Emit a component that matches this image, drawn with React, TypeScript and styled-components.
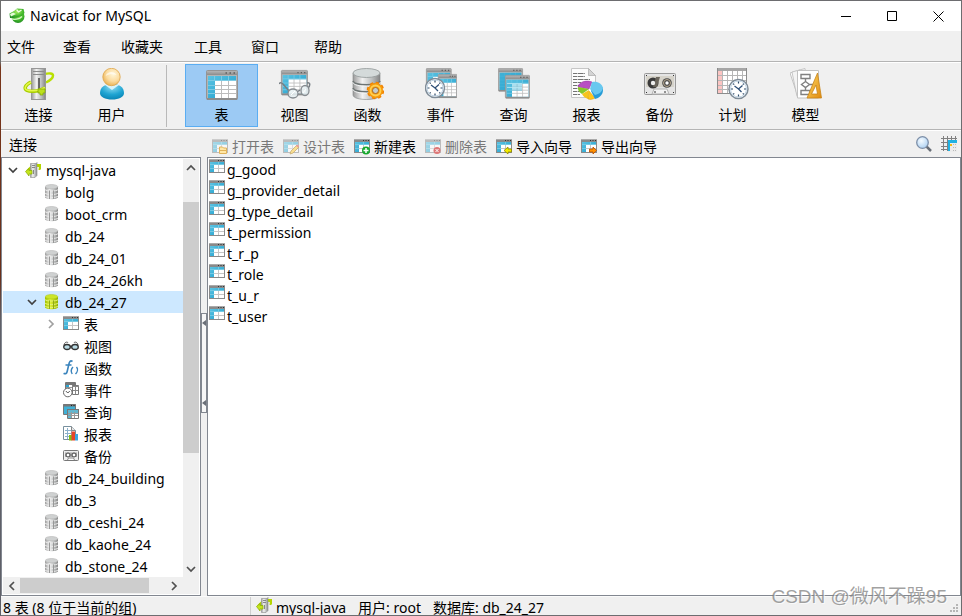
import React from "react";
import styled, { createGlobalStyle } from "styled-components";

const FONT = '"Noto Sans", "Noto Sans CJK SC", sans-serif';
const FACE = "#f0f0f0";
const EDGE = "#828790";

const GlobalStyle = createGlobalStyle`
  * { box-sizing: border-box; }
  body { margin: 0; font: 14px/20px ${FONT}; color: #000; background: ${FACE}; }
  button { font: inherit; color: inherit; border: 0; padding: 0; background: none; }
  ul { list-style: none; margin: 0; padding: 0; }
  svg { display: block; flex: none; }
`;

/* ---------- icons ---------- */

const Defs = () => (
  <svg width="0" height="0" aria-hidden="true">
    <defs>
      <linearGradient id="metal" x1="0" x2="1">
        <stop offset="0" stopColor="#9a9a9a" />
        <stop offset=".35" stopColor="#f2f2f2" />
        <stop offset=".7" stopColor="#bcbfbf" />
        <stop offset="1" stopColor="#858585" />
      </linearGradient>
      <linearGradient id="lime" x1="0" x2="1">
        <stop offset="0" stopColor="#9bbd00" />
        <stop offset=".4" stopColor="#e2f23a" />
        <stop offset="1" stopColor="#8fae00" />
      </linearGradient>
      <linearGradient id="sky" x1="0" y1="0" x2="1" y2="1">
        <stop offset="0" stopColor="#5cc3e2" />
        <stop offset="1" stopColor="#1d9dcb" />
      </linearGradient>
      <linearGradient id="bar" x1="0" y1="0" x2="0" y2="1">
        <stop offset="0" stopColor="#b4b4b4" />
        <stop offset="1" stopColor="#8c8c8c" />
      </linearGradient>
      <radialGradient id="head" cx=".6" cy=".35" r=".65">
        <stop offset="0" stopColor="#fff6d8" />
        <stop offset=".6" stopColor="#fbdca0" />
        <stop offset="1" stopColor="#ecb65c" />
      </radialGradient>
      <radialGradient id="torso" cx=".5" cy=".2" r=".8">
        <stop offset="0" stopColor="#8edcf2" />
        <stop offset=".6" stopColor="#1fa4d2" />
        <stop offset="1" stopColor="#0b86b6" />
      </radialGradient>
      <radialGradient id="globe" cx=".5" cy=".35" r=".7">
        <stop offset="0" stopColor="#a9ee62" />
        <stop offset=".6" stopColor="#43b82c" />
        <stop offset="1" stopColor="#1b8420" />
      </radialGradient>
      <linearGradient id="gold" x1="0" y1="0" x2="1" y2="1">
        <stop offset="0" stopColor="#ffdb66" />
        <stop offset="1" stopColor="#e08a10" />
      </linearGradient>
      <radialGradient id="lens" cx=".4" cy=".35" r=".7">
        <stop offset="0" stopColor="#f5fbff" />
        <stop offset="1" stopColor="#acd0f2" />
      </radialGradient>
    </defs>
  </svg>
);

const Icon = ({ size = 32, children }: { size?: number; children: React.ReactNode }) => (
  <svg width={size} height={size} viewBox={`0 0 ${size} ${size}`} aria-hidden="true">
    {children}
  </svg>
);

const Grid = () => (
  <>
    <rect x=".5" y=".5" width="31" height="29" rx="1" fill="#b4b4b4" stroke="#949494" />
    <rect x="1" y="1" width="30" height="4" fill="url(#bar)" />
    <path d="M19.500 3h1.500M23.500 3h1.500M27.500 3h1.500" stroke="#5e5e5e" strokeWidth="1.500" />
    <rect x="2" y="6" width="28" height="22" fill="url(#sky)" />
    <path d="M9 11h21v17H9z" fill="#fff" />
    <path d="M9 15.500h21M9 19.500h21M9 23.500h21M15.500 11v17M22.500 11v17" stroke="#bcbcbc" />
    <path d="M2 10.500h28M2 15.500h7M2 19.500h7M2 23.500h7M8.500 6v5M15.500 6v5M22.500 6v5" stroke="#7ccbe4" />
    <path d="M1 29h30" stroke="#8d8d8d" strokeWidth="2" />
  </>
);

const SmallGrid = ({ faded }: { faded?: boolean }) => (
  <g opacity={faded ? 0.5 : 1}>
    <rect x="0" y="0" width="16" height="14" fill="#8a8a8a" />
    <path d="M0 .5h16" stroke="#aaa" />
    <path d="M9 1.500h1M11.500 1.500h1M14 1.500h1" stroke="#333" />
    <rect x="1" y="3" width="14" height="10" fill="url(#sky)" />
    <path d="M5 6h10v7H5z" fill="#fff" />
    <path d="M5 9.500h10M9.500 6v7" stroke="#c6c6c6" />
    <path d="M1 9.500h4M9.500 3v3M1 5.500h14" stroke="#75c9e3" />
  </g>
);

const Clock = () => (
  <>
    <circle cx="0" cy="0" r="9.500" fill="#fff" stroke="#7f8c98" strokeWidth="1.500" />
    <circle cx="0" cy="0" r="8" fill="none" stroke="#bfd4e6" />
    <path d="M0-7.500v2M0 7.500v-2M-7.500 0h2M7.500 0h-2M-5.300-5.300l1 1M5.300-5.300l-1 1M-5.300 5.300l1-1M5.300 5.300l-1-1" stroke="#2f4a66" strokeWidth="1.200" />
    <path d="M-4-3L0 0l4-3.500M0 0l3 3" fill="none" stroke="#2d4f77" strokeWidth="1.300" />
  </>
);

const ConnectIcon = () => (
  <Icon>
    <path d="M21 6c5-1 9-1 9 1.500 0 3-3 5-7 7" fill="none" stroke="#b9e000" strokeWidth="2.500" />
    <rect x="8.500" y=".5" width="14" height="31" fill="url(#metal)" stroke="#979797" />
    <path d="M10 3.500h11M10 6.500h11" stroke="#8b8b8b" />
    <path d="M16 10v11" stroke="#444" strokeWidth="1.500" />
    <path d="M8 14C2 17 .5 21 4 22.500c5 2 14 0 18-2.500" fill="none" stroke="#a9cf00" strokeWidth="3.500" />
    <path d="M8 14C2 17 .5 21 4 22c5 2 14 0 18-2.500" fill="none" stroke="#e6f84b" strokeWidth="1.500" />
    <path d="M15 21h7v4h-2v2h-3v-2h-2z" fill="#bce01b" stroke="#7fa307" strokeWidth=".7" />
  </Icon>
);

const UserIcon = () => (
  <Icon>
    <path d="M4 25c0-6 5-9 12-9s12 3 12 9c0 4-5 6.500-12 6.500S4 29 4 25z" fill="url(#torso)" />
    <path d="M9 17l7 5 7-5z" fill="#d8f4fb" />
    <circle cx="15.500" cy="9" r="8.700" fill="url(#head)" stroke="#dda54a" strokeWidth=".8" />
    <path d="M9.500 8c2-5 9-5 11-1-4-1-7-1-11 1z" fill="#fff" opacity=".6" />
  </Icon>
);

const TableIcon = () => (
  <Icon><g transform="translate(0 2)"><Grid /></g></Icon>
);

const ViewIcon = () => (
  <Icon>
    <g transform="translate(2 2) scale(.84)"><Grid /></g>
    <path d="M0 16c1-2 3-1 4 0l6 7M18 24l3-2M29 20c2-2 3-6-1-5" fill="none" stroke="#777f85" strokeWidth="1.500" />
    <ellipse cx="14" cy="25.500" rx="5" ry="4.500" fill="#e6f0f2" fillOpacity=".85" stroke="#858b90" strokeWidth="1.300" />
    <ellipse cx="26" cy="22.500" rx="4" ry="5" fill="#e6f0f2" fillOpacity=".85" stroke="#858b90" strokeWidth="1.300" />
    <path d="M12 27l4-4M24 25l3-4" stroke="#fff" />
  </Icon>
);

const FunctionIcon = () => (
  <Icon>
    <path d="M1 5v22c0 6 27 6 27 0V5z" fill="url(#metal)" stroke="#7f8584" strokeWidth=".6" />
    <path d="M1 13c1 5 26 5 27 0M1 20c1 5 26 5 27 0" fill="none" stroke="#6d7473" strokeWidth="1.500" />
    <path d="M1 14.500c1 5 26 5 27 0M1 21.500c1 5 26 5 27 0" fill="none" stroke="#f3f5f5" />
    <ellipse cx="14.500" cy="5" rx="13.500" ry="4.500" fill="#d4dada" stroke="#929898" strokeWidth=".8" />
    <circle cx="23.500" cy="22.500" r="7.500" fill="none" stroke="#f08000" strokeWidth="2.500" strokeDasharray="3.300 2.590" />
    <circle cx="23.500" cy="22.500" r="5.300" fill="none" stroke="#f79a0c" strokeWidth="4.500" />
    <circle cx="23.500" cy="22.500" r="5" fill="none" stroke="#ffd052" strokeWidth="1.800" />
    <circle cx="23.500" cy="22.500" r="3" fill="#c2cccf" stroke="#a85b00" strokeWidth=".8" />
  </Icon>
);

const EventIcon = () => (
  <Icon>
    <g transform="translate(1) scale(.8)"><Grid /></g>
    <g transform="translate(13 6) scale(.6 .8)"><Grid /></g>
    <g transform="translate(10 20)"><Clock /></g>
  </Icon>
);

const QueryIcon = () => (
  <Icon>
    <g transform="scale(.78)"><Grid /></g>
    <path d="M2 5h21v17H2z" fill="#36abd3" opacity=".75" />
    <g transform="translate(7 7) scale(.78)"><Grid /></g>
    <path d="M8 12h16v11H8z" fill="#58bfdf" opacity=".5" />
    <path d="M9 15.500h15M9 19.500h15" stroke="#c1edf8" opacity=".7" />
  </Icon>
);

const ReportIcon = () => (
  <Icon>
    <path d="M.5.500h17l7 7v22H.5z" fill="#fcfcfc" stroke="#c6c6c6" />
    <path d="M17.500.5l7 7h-7z" fill="#d4d4d4" stroke="#aaa" strokeWidth=".7" />
    <path d="M2 5.500h12M2 8.500h12M2 11.500h17M2 14.500h8M2 17.500h6M2 20.500h6M2 23.500h7M2 26.500h7" stroke="#747474" strokeDasharray="4 .6 6 .6" />
    <path d="M18 21L7 19c1-6 10-7 14-5z" fill="#b84fc2" stroke="#98369f" strokeWidth=".5" />
    <path d="M18 21L7 19c-.5 3 1 5 4 7z" fill="#86c728" />
    <path d="M18 22l-7 4c1 2 3 4 6 5z" fill="#f6c41c" />
    <path d="M18 23l-1 8c3 1 5 0 7-1z" fill="#ffc619" stroke="#d89a00" strokeWidth=".5" />
    <path d="M20 23l1-8c6-1 11 3 11 7 0 5-4 8-8 9z" fill="#279cd6" />
    <path d="M19 21l2-7c6-1 10 2 11 6-1 4-4 6-8 7z" fill="#69c8ef" />
  </Icon>
);

const BackupIcon = () => (
  <Icon>
    <rect x=".5" y="5.500" width="31" height="21" rx="1" fill="#e4e4e4" stroke="#9a9a9a" />
    <rect x="2" y="8" width="28" height="11" fill="#d6d3ca" />
    <circle cx="9" cy="15" r="5.500" fill="#3a3a3a" />
    <path d="M12 9h4l-3 10H9z" fill="#6a655c" />
    <circle cx="9" cy="15" r="2.200" fill="#eee" />
    <circle cx="23" cy="15" r="4.800" fill="#4a4a4a" />
    <circle cx="23" cy="15" r="3.500" fill="none" stroke="#b9aa91" />
    <circle cx="23" cy="15" r="1.700" fill="#fff" />
    <path d="M8 26l2-5h13l2 5z" fill="#f3f3f3" stroke="#b3b3b3" />
    <path d="M10 24h2M20 24h2M2 7.500h1M29 7.500h1M2 24.500h1M29 24.500h1" stroke="#333" />
  </Icon>
);

const ScheduleIcon = () => (
  <Icon>
    <rect x=".5" y=".5" width="29" height="25" fill="#fff" stroke="#8c8c8c" />
    <path d="M1 1.500h28" stroke="#a6a6a6" strokeWidth="3" />
    <path d="M1 3h4v22H1z" fill="#fbc4c2" />
    <path d="M5.500 3v22M10.500 3v22M15.500 3v22M20.500 3v22M25.500 3v22M1 7.500h28M1 12.500h28M1 17.500h28M1 21.500h28" stroke="#b6b6b6" />
    <g transform="translate(21.500 21)"><Clock /></g>
  </Icon>
);

const ModelIcon = () => (
  <Icon>
    <path d="M0 5l10-3 8 24-10 3z" fill="#fbfbfb" stroke="#b8b8b8" strokeWidth=".8" />
    <path d="M2 4L15 .5l4 25-12 3z" fill="#f4f4f4" stroke="#bbb" strokeWidth=".8" />
    <path d="M7.500 2.500h21V30h-21z" fill="#fff" stroke="#c2c2c2" />
    <path d="M11 6.500h9v4h-9zM15.500 10.500v3M15.500 13.500l4 3-4 3-4-3zM15.500 19.500v3M11 22.500h9v4h-9zM19.500 16.500h5" fill="none" stroke="#808080" strokeWidth="1.400" />
    <path d="M27.500 5L31.500 30 17 30z" fill="url(#gold)" stroke="#c88418" strokeWidth=".8" />
    <path d="M26 17l1.500 9h-6z" fill="#fff" stroke="#c88418" strokeWidth=".8" />
  </Icon>
);

const AppIcon = () => (
  <Icon size={18}>
    <circle cx="10" cy="9.500" r="6.500" fill="url(#globe)" />
    <path d="M1.500 6.500L6 4l3-2.500 6.500.5 1 4-3 3-5 1.500L2 11z" fill="url(#globe)" />
    <path d="M3 11.500c3 1.500 8 1 11-2" fill="none" stroke="#d7fac4" strokeWidth="1.300" />
    <path d="M2 7l3-1.500 3 1.500-5 2.500z" fill="#e6fbd6" />
    <path d="M8.500 2.500l2 2.500 3-2" fill="none" stroke="#f3ffe9" strokeWidth="1.300" />
  </Icon>
);

const ServerIcon = () => (
  <Icon size={16}>
    <path d="M10 4h5l-.5 4M2 9l3-3v2.500" fill="none" stroke="#b4d500" strokeWidth="2" />
    <path d="M5.500 1.500h5.500l1-1v13l-2 2H5.500z" fill="url(#metal)" stroke="#999" strokeWidth=".7" />
    <path d="M7 3.500h3M7 5.500h3M8.500 8v4" stroke="#888" />
    <path d="M.5 9.500L4 6.500v2h3v3.500H4v2z" fill="#c4e51d" stroke="#87a800" strokeWidth=".7" />
    <path d="M12 3h3.500v4" fill="none" stroke="#b4d500" strokeWidth="1.800" />
  </Icon>
);

const DbIcon = ({ open }: { open?: boolean }) => (
  <Icon size={16}>
    <path d="M0 3v10c0 3 13 3 13 0V3z" fill={open ? "url(#lime)" : "url(#metal)"} />
    <path d="M0 5.500c1 2 12 2 13 0M0 9c1 2 12 2 13 0M0 12c1 2 12 2 13 0" fill="none" stroke={open ? "#e6f57a" : "#ececec"} />
    <path d="M4.500 6.500v8.500M8.500 6.500v8.500" stroke={open ? "#8fa91a" : "#989898"} />
    <ellipse cx="6.500" cy="2.700" rx="6.300" ry="2.200" fill={open ? "#cce52a" : "#cfd1d1"} stroke={open ? "#a9c511" : "#aaa"} strokeWidth=".5" />
  </Icon>
);

const ViewSmall = () => (
  <Icon size={16}>
    <path d="M1 7c1-4 4-3 4-2M15 7c-1-4-4-3-4-2" fill="none" stroke="#555" />
    <ellipse cx="4" cy="9" rx="3.300" ry="2.500" fill="#b9dbe5" stroke="#333" strokeWidth="1.300" />
    <ellipse cx="12" cy="9" rx="3.300" ry="2.500" fill="#b9dbe5" stroke="#333" strokeWidth="1.300" />
    <path d="M7 8.500h2" stroke="#333" strokeWidth="1.300" />
  </Icon>
);

const FxSmall = () => (
  <Icon size={16}>
    <path d="M9.500 1.500C7.500 0 6.300 1.500 5.800 4.500L4.300 11C3.800 13.500 2.500 14.500.6 13.300M2.500 5h6" fill="none" stroke="#3a84bd" strokeWidth="1.600" />
    <path d="M10 7c-2 2-2 5-.8 7M13.500 7c1.800 2 1 5-1 7" fill="none" stroke="#3a84bd" strokeWidth="1.400" />
  </Icon>
);

const EventSmall = () => (
  <Icon size={16}>
    <path d="M2.500.500h10v10h-10z" fill="#fff" stroke="#777" />
    <path d="M2 2h11" stroke="#777" strokeWidth="2" />
    <path d="M3 5.500h9M5.500 3v7M9.500 3v7" stroke="#999" />
    <path d="M3 3h3v2H3z" fill="#2ba5d3" />
    <path d="M9.500 3.500h6v9h-6z" fill="#fff" stroke="#777" />
    <path d="M9 4.500h7M10 8.500h5M12.500 5v7" stroke="#888" />
    <circle cx="4.800" cy="10.500" r="4.300" fill="#fff" stroke="#666" />
    <path d="M2.800 9l2 2 2-2" fill="none" stroke="#555" />
  </Icon>
);

const QuerySmall = () => (
  <Icon size={16}>
    <path d="M.5.500h12v10H.5z" fill="#3fb0d6" stroke="#777" />
    <path d="M0 1.500h13" stroke="#777" strokeWidth="2" />
    <path d="M8 1.500h1M10.500 1.500h1" stroke="#222" />
    <path d="M4.500 5.500h11v9h-11z" fill="#fff" stroke="#777" />
    <path d="M5 6h10v3H5zM5 9h3v5H5z" fill="#63b6cf" />
    <path d="M5 9.500h10M5 11.500h10M8.500 8v6M11.500 8v6" stroke="#9a9a9a" />
    <path d="M4 5.500h12" stroke="#777" />
  </Icon>
);

const ReportSmall = () => (
  <Icon size={16}>
    <path d="M.5.500h8l4 4v9H.5z" fill="#fff" stroke="#78909e" />
    <path d="M2 4.500h8M2 7.500h9M2 10.500h9M4.500 2v11M8.500 3v9" stroke="#8bb0cc" />
    <path d="M8.500.5v4h4" fill="#e6e6e6" stroke="#888" />
    <path d="M6 9h3v5.500H6z" fill="#82bd18" />
    <path d="M8.500 5.500H12v9H8.500z" fill="#e5452b" />
    <path d="M12 8h3v6.500h-3z" fill="#3ca5df" />
  </Icon>
);

const BackupSmall = () => (
  <Icon size={16}>
    <rect x=".5" y="2.500" width="15" height="10" rx="1" fill="#eee" stroke="#777" />
    <path d="M2 4.500h12v4.500H2z" fill="#a5a5a5" />
    <circle cx="5" cy="7" r="2" fill="#fff" stroke="#444" />
    <circle cx="11" cy="7" r="2" fill="#fff" stroke="#444" />
    <path d="M4.500 12l1-2h5l1 2" fill="#fff" stroke="#888" />
  </Icon>
);

type Badge = "none" | "open" | "edit" | "add" | "remove" | "in" | "out";

const GridIcon = ({ badge = "none", faded }: { badge?: Badge; faded?: boolean }) => (
  <Icon size={16}>
    <SmallGrid faded={faded} />
    {badge === "open" && <path d="M7.500 14.500V8h3l1 1h3v5.500zM8 11.500h7" fill="#ffe7a6" stroke="#e0b35a" />}
    {badge === "edit" && (
      <>
        <path d="M7 15l1-3 6-6 2 2-6 6z" fill="#f9df91" stroke="#c9ad72" strokeWidth=".8" />
        <path d="M13 7l1-1.500 2 1.500-1.200 1.500z" fill="#ec9c98" />
      </>
    )}
    {badge === "add" && (
      <>
        <circle cx="12" cy="11.500" r="4" fill="#17a82f" />
        <path d="M12 9v5M9.500 11.500h5" stroke="#fff" strokeWidth="1.500" />
      </>
    )}
    {badge === "remove" && (
      <>
        <circle cx="12" cy="11.500" r="3.500" fill="#dd7777" />
        <path d="M10.500 10l3 3M13.500 10l-3 3" stroke="#fff" />
      </>
    )}
    {badge === "in" && <path d="M8 11.500L12 8v2h3.500v3H12v2z" fill="#f3ec00" stroke="#8e8900" strokeWidth=".8" />}
    {badge === "out" && <path d="M15.500 11.500L12 8v2H8.500v3H12v2z" fill="#ff9100" stroke="#b34b00" strokeWidth=".8" />}
  </Icon>
);

const SearchIcon = () => (
  <Icon size={16}>
    <path d="M10.500 10.500l4.500 4.500" stroke="#686e77" strokeWidth="2.500" />
    <circle cx="6.500" cy="6.500" r="5.800" fill="url(#lens)" stroke="#7d8fa8" strokeWidth="1.300" />
  </Icon>
);

const LayoutIcon = () => (
  <Icon size={16}>
    <path d="M2.500 0v15M6.500 0v15M10.500 0v4M14.500 0v4M0 2.500h16M0 6.500h7M0 10.500h7M0 13.500h7" stroke="#808080" />
    <path d="M7 4h9v12H7z" fill="#ececec" />
    <path d="M7 4h9v3H9v8H7z" fill="#21b1e2" />
    <path d="M9 8h2v2H9z" fill="#f6bc18" />
    <path d="M12 8.500h3M12 11.500h3M12 14.500h3" stroke="#b9b9b9" strokeDasharray="1 1" />
  </Icon>
);

type Dir = "up" | "down" | "left" | "right";
const turns: Record<Dir, number> = { down: 0, left: 90, up: 180, right: 270 };

const Chevron = ({ dir, color = "#505050" }: { dir: Dir; color?: string }) => (
  <Icon size={10}>
    <path d="M1 3l4 4 4-4" fill="none" stroke={color} strokeWidth="1.700" transform={`rotate(${turns[dir]} 5 5)`} />
  </Icon>
);

/* ---------- window frame ---------- */

const Window = styled.div`
  position: relative;
  display: flex;
  flex-direction: column;
  height: 100vh;
  min-height: 480px;
  padding: 1px;
  background:
    linear-gradient(#6d6d6d 10%, #78351a 11%, #6a2f1a 45%, #5f6068 52%) left / 1px 100% no-repeat,
    #6d6d70;
`;

const TitleBar = styled.header`
  display: flex;
  align-items: center;
  height: 30px;
  padding-left: 7px;
  background: #fff;
`;

const Title = styled.h1`
  flex: 1;
  margin: 0 0 0 4px;
  font-size: 14px;
  font-weight: 400;
`;

const CaptionButton = styled.button`
  display: grid;
  place-items: center;
  width: 46px;
  height: 30px;
`;

const MenuBar = styled.nav`
  display: grid;
  grid-template-columns: 56px 58px 73px 57px 63px auto;
  justify-content: start;
  align-items: center;
  height: 31px;
  padding: 2px 0 0 6px;
  background: ${FACE};
  border-bottom: 1px solid #b4b4b4;
`;

const MenuItem = styled.button`
  text-align: left;
`;

const Toolbar = styled.div`
  display: flex;
  height: 68px;
  padding: 1px 0 0 1px;
  background: ${FACE};
  border-top: 1px solid #fff;
  border-bottom: 1px solid #b4b4b4;
`;

const Separator = styled.div`
  width: 1px;
  height: 62px;
  margin: 1px 18px 0;
  background: #b9b9b9;
`;

const Tool = styled.button<{ $active?: boolean }>`
  display: flex;
  flex-direction: column;
  align-items: center;
  gap: 5px;
  width: 73px;
  height: 63px;
  padding-top: 3px;
  border: 1px solid ${(p) => (p.$active ? "#5aadf2" : "transparent")};
  background: ${(p) => (p.$active ? "#9ccaf4" : "transparent")};
`;

/* ---------- work area ---------- */

const Work = styled.main`
  display: flex;
  flex: 1;
  min-height: 0;
  background: ${FACE};
  border-top: 1px solid #fff;
`;

const Side = styled.section`
  display: flex;
  flex-direction: column;
  width: 200px;
`;

const SideTitle = styled.h2`
  height: 26px;
  margin: 0;
  padding: 4px 8px;
  font-size: 14px;
  font-weight: 400;
`;

const TreePane = styled.div`
  display: grid;
  grid-template-columns: minmax(0, 1fr) 16px;
  grid-template-rows: minmax(0, 1fr) 17px;
  flex: 1;
  min-height: 0;
  padding: 1px;
  background: #fff;
  border: 1px solid ${EDGE};
`;

const Tree = styled.ul`
  overflow: hidden;
`;

const TreeRow = styled.li<{ $level: number; $selected?: boolean }>`
  display: flex;
  align-items: center;
  height: 22px;
  padding-left: ${(p) => [5, 24, 43][p.$level]}px;
  background: ${(p) => (p.$selected ? "#cde8ff" : "transparent")};
  white-space: nowrap;
`;

const Twisty = styled.span`
  display: flex;
  width: 10px;
  height: 10px;
`;

const TreeIcon = styled.span<{ $level: number }>`
  margin-left: ${(p) => [7, 8, 7][p.$level]}px;
  margin-right: ${(p) => [5, 4, 5][p.$level]}px;
`;

const TreeLabel = styled.span`
  padding-top: 2px;
`;

const VScroll = styled.div`
  display: flex;
  flex-direction: column;
  align-items: center;
  background: ${FACE};
`;

const HScroll = styled.div`
  grid-column: 1 / -1;
  display: flex;
  align-items: center;
  padding-right: 17px;
  background: ${FACE};
`;

const ScrollButton = styled.button`
  display: grid;
  place-items: center;
  flex: none;
  width: 17px;
  height: 17px;
`;

const Track = styled.div<{ $vertical?: boolean }>`
  display: flex;
  flex-direction: ${(p) => (p.$vertical ? "column" : "row")};
  flex: 1;
  align-self: stretch;
  padding: ${(p) => (p.$vertical ? "26px 0 0" : "1px 0")};
`;

const Thumb = styled.div<{ $share: number }>`
  flex: 0 0 ${(p) => p.$share}%;
  background: #cdcdcd;
`;

const Splitter = styled.div`
  display: flex;
  align-items: center;
  width: 6px;
  padding-bottom: 2px;
`;

const Grip = styled.button`
  display: flex;
  flex-direction: column;
  justify-content: space-between;
  width: 6px;
  height: 100px;
  padding: 5px 0;
  background: #f7f7f7;
  border: 1px solid ${EDGE};
`;

const Content = styled.section`
  display: flex;
  flex: 1;
  flex-direction: column;
  min-width: 0;
`;

const Actions = styled.div`
  display: flex;
  align-items: center;
  gap: 9px;
  height: 26px;
  padding: 5px 4px 0 5px;
`;

const Action = styled.button`
  display: flex;
  align-items: center;
  gap: 4px;
  white-space: nowrap;
  &:disabled { color: #787878; }
`;

const ActionsEnd = styled.div`
  display: flex;
  gap: 9px;
  margin: -5px 0 0 auto;
`;

const TableList = styled.ul`
  flex: 1;
  min-height: 0;
  overflow: hidden;
  padding: 1px;
  background: #fff;
  border: 1px solid ${EDGE};
`;

const TableRow = styled.li`
  display: flex;
  gap: 2px;
  height: 21px;
  line-height: 21px;
`;

const StatusBar = styled.footer`
  display: flex;
  height: 19px;
  overflow: hidden;
  line-height: 22px;
  background: ${FACE};
  border-top: 1px solid #fafafa;
  white-space: nowrap;
`;

const StatusCount = styled.div`
  width: 250px;
  padding-left: 2px;
  border-right: 1px solid #cfcfcf;
`;

const StatusInfo = styled.div`
  display: flex;
  flex: 1;
  gap: 12px;
  padding-left: 5px;
`;

const StatusServer = styled.span`
  display: flex;
  gap: 4px;
`;

const SizeGrip = styled.div`
  align-self: flex-end;
  padding: 0 2px 2px 0;
`;

const Watermark = styled.div`
  position: absolute;
  right: 15px;
  bottom: 7px;
  font: 19px/24px "Liberation Sans", "Noto Sans CJK SC", sans-serif;
  color: rgba(130, 130, 130, 0.75);
  text-shadow: 1px 1px 0 rgba(255, 255, 255, 0.7);
  pointer-events: none;
`;

/* ---------- data ---------- */

const menus = ["文件", "查看", "收藏夹", "工具", "窗口", "帮助"];

const objectTools = [
  { label: "表", Glyph: TableIcon },
  { label: "视图", Glyph: ViewIcon },
  { label: "函数", Glyph: FunctionIcon },
  { label: "事件", Glyph: EventIcon },
  { label: "查询", Glyph: QueryIcon },
  { label: "报表", Glyph: ReportIcon },
  { label: "备份", Glyph: BackupIcon },
  { label: "计划", Glyph: ScheduleIcon },
  { label: "模型", Glyph: ModelIcon },
];

const actions: { label: string; badge: Badge; off?: boolean }[] = [
  { label: "打开表", badge: "open", off: true },
  { label: "设计表", badge: "edit", off: true },
  { label: "新建表", badge: "add" },
  { label: "删除表", badge: "remove", off: true },
  { label: "导入向导", badge: "in" },
  { label: "导出向导", badge: "out" },
];

type Node = { label: string; level: number; icon: React.ReactNode; arrow?: Dir; selected?: boolean };

const db = (label: string): Node => ({ label, level: 1, icon: <DbIcon /> });

const tree: Node[] = [
  { label: "mysql-java", level: 0, icon: <ServerIcon />, arrow: "down" },
  ...["bolg", "boot_crm", "db_24", "db_24_01", "db_24_26kh"].map(db),
  { label: "db_24_27", level: 1, icon: <DbIcon open />, arrow: "down", selected: true },
  { label: "表", level: 2, icon: <GridIcon />, arrow: "right" },
  { label: "视图", level: 2, icon: <ViewSmall /> },
  { label: "函数", level: 2, icon: <FxSmall /> },
  { label: "事件", level: 2, icon: <EventSmall /> },
  { label: "查询", level: 2, icon: <QuerySmall /> },
  { label: "报表", level: 2, icon: <ReportSmall /> },
  { label: "备份", level: 2, icon: <BackupSmall /> },
  ...["db_24_building", "db_3", "db_ceshi_24", "db_kaohe_24", "db_stone_24"].map(db),
];

const tables = ["g_good", "g_provider_detail", "g_type_detail", "t_permission", "t_r_p", "t_role", "t_u_r", "t_user"];

const GripArrow = () => (
  <svg width="4" height="8" viewBox="0 0 4 8" aria-hidden="true">
    <path d="M4 1v6L0 4z" fill="#6a6f78" />
  </svg>
);

export default function App() {
  return (
    <Window>
      <GlobalStyle />
      <TitleBar>
        <AppIcon />
        <Title>Navicat for MySQL</Title>
        <CaptionButton aria-label="最小化">
          <Icon size={11}><path d="M0 5.500h10" stroke="#000" /></Icon>
        </CaptionButton>
        <CaptionButton aria-label="最大化">
          <Icon size={11}><path d="M.5.500h9v9h-9z" fill="none" stroke="#000" /></Icon>
        </CaptionButton>
        <CaptionButton aria-label="关闭">
          <Icon size={11}><path d="M.5.500l10 10M10.500.5l-10 10" stroke="#000" /></Icon>
        </CaptionButton>
      </TitleBar>
      <MenuBar>
        {menus.map((m) => <MenuItem key={m}>{m}</MenuItem>)}
      </MenuBar>
      <Toolbar>
        <Tool><ConnectIcon />连接</Tool>
        <Tool><UserIcon />用户</Tool>
        <Separator />
        {objectTools.map(({ label, Glyph }, i) => (
          <Tool key={label} $active={i === 0}><Glyph />{label}</Tool>
        ))}
      </Toolbar>
      <Work>
        <Side>
          <SideTitle>连接</SideTitle>
          <TreePane>
            <Tree>
              {tree.map((n) => (
                <TreeRow key={n.label} $level={n.level} $selected={n.selected}>
                  <Twisty>
                    {n.arrow && <Chevron dir={n.arrow} color={n.arrow === "right" ? "#a0a0a0" : "#404040"} />}
                  </Twisty>
                  <TreeIcon $level={n.level}>{n.icon}</TreeIcon>
                  <TreeLabel>{n.label}</TreeLabel>
                </TreeRow>
              ))}
            </Tree>
            <VScroll>
              <ScrollButton aria-label="向上滚动"><Chevron dir="up" /></ScrollButton>
              <Track $vertical><Thumb $share={70} /></Track>
              <ScrollButton aria-label="向下滚动"><Chevron dir="down" /></ScrollButton>
            </VScroll>
            <HScroll>
              <ScrollButton aria-label="向左滚动"><Chevron dir="left" /></ScrollButton>
              <Track><Thumb $share={89} /></Track>
              <ScrollButton aria-label="向右滚动"><Chevron dir="right" /></ScrollButton>
            </HScroll>
          </TreePane>
        </Side>
        <Splitter>
          <Grip aria-label="折叠面板"><GripArrow /><GripArrow /></Grip>
        </Splitter>
        <Content>
          <Actions>
            {actions.map((a) => (
              <Action key={a.label} disabled={a.off}>
                <GridIcon badge={a.badge} faded={a.off} />
                {a.label}
              </Action>
            ))}
            <ActionsEnd>
              <Action aria-label="搜索"><SearchIcon /></Action>
              <Action aria-label="布局"><LayoutIcon /></Action>
            </ActionsEnd>
          </Actions>
          <TableList>
            {tables.map((t) => <TableRow key={t}><GridIcon />{t}</TableRow>)}
          </TableList>
        </Content>
      </Work>
      <StatusBar>
        <StatusCount>8 表 (8 位于当前的组)</StatusCount>
        <StatusInfo>
          <StatusServer><ServerIcon />mysql-java</StatusServer>
          <span>用户: root</span>
          <span>数据库: db_24_27</span>
        </StatusInfo>
        <SizeGrip>
          <Icon size={9}>
            <path d="M6 1h2M3 4h2M6 4h2M0 7h2M3 7h2M6 7h2" stroke="#b5b5b5" strokeWidth="2" />
          </Icon>
        </SizeGrip>
      </StatusBar>
      <Watermark>CSDN @微风不躁95</Watermark>
      <Defs />
    </Window>
  );
}
